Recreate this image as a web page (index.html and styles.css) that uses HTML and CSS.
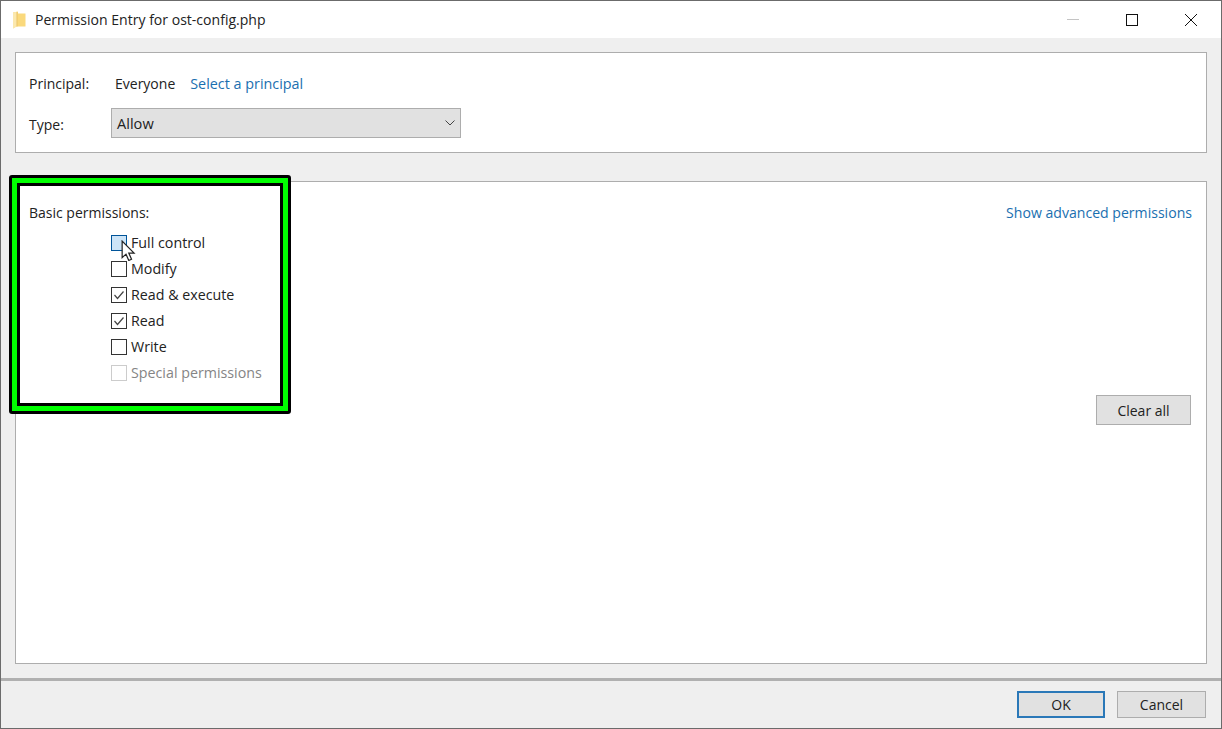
FILE: index.html
```html
<!DOCTYPE html>
<html>

<head>
    <title>Permission Entry for ost-config.php</title>
    <link rel="stylesheet" href="styles.css">
</head>

<body>
    <div class="window">
        <div class="title-bar">
            <svg class="folder-icon" width="13" height="18" viewBox="0 0 13 18">
                <path d="M0 1.5 L5 0.5 L5 2.5 L12.5 2.5 L12.5 15.5 L3 15.5 L0 17.5 Z" fill="#fad97c" />
                <path d="M0 1.5 L4 0.8 L4 15.5 L0 17.5 Z" fill="#fbe8ae" />
                <path d="M4 1 L4 15.5" stroke="#e9c468" fill="none" />
            </svg>
            <span class="title-text">Permission Entry for ost-config.php</span>
            <div class="window-controls">
                <svg width="12" height="12" viewBox="0 0 12 12">
                    <path d="M0 5.5 H12" stroke="#c4c4c4" fill="none" />
                </svg>
                <svg width="12" height="12" viewBox="0 0 12 12">
                    <rect x="0.5" y="0.5" width="11" height="11" stroke="#111" fill="none" />
                </svg>
                <svg width="12" height="12" viewBox="0 0 12 12">
                    <path d="M0 0 L12 12 M12 0 L0 12" stroke="#111" fill="none" />
                </svg>
            </div>
        </div>

        <div class="content">
            <div class="panel principal-panel">
                <div class="form-row principal-row">
                    <span class="form-label">Principal:</span>
                    <span class="principal-name">Everyone</span>
                    <a class="link">Select a principal</a>
                </div>
                <div class="form-row type-row">
                    <span class="form-label">Type:</span>
                    <div class="select-box">
                        <span>Allow</span>
                        <svg width="10" height="6" viewBox="0 0 10 6">
                            <path d="M0.5 0.5 L5 5 L9.5 0.5" stroke="#444" fill="none" />
                        </svg>
                    </div>
                </div>
            </div>

            <div class="panel permissions-panel">
                <div class="permissions-header">
                    <span>Basic permissions:</span>
                    <a class="link advanced-link">Show advanced permissions</a>
                </div>
                <div class="check-list">
                    <div class="check-row">
                        <span class="check-box hover"></span>
                        <span class="check-label">Full control</span>
                    </div>
                    <div class="check-row">
                        <span class="check-box"></span>
                        <span class="check-label">Modify</span>
                    </div>
                    <div class="check-row">
                        <span class="check-box">
                            <svg width="14" height="14" viewBox="0 0 14 14">
                                <path d="M2.5 7 L5.5 10.5 L11.5 3.5" stroke="#444" stroke-width="1.2" fill="none" />
                            </svg>
                        </span>
                        <span class="check-label">Read &amp; execute</span>
                    </div>
                    <div class="check-row">
                        <span class="check-box">
                            <svg width="14" height="14" viewBox="0 0 14 14">
                                <path d="M2.5 7 L5.5 10.5 L11.5 3.5" stroke="#444" stroke-width="1.2" fill="none" />
                            </svg>
                        </span>
                        <span class="check-label">Read</span>
                    </div>
                    <div class="check-row">
                        <span class="check-box"></span>
                        <span class="check-label">Write</span>
                    </div>
                    <div class="check-row disabled">
                        <span class="check-box"></span>
                        <span class="check-label">Special permissions</span>
                    </div>
                </div>
                <button class="btn clear-btn">Clear all</button>
            </div>
        </div>

        <div class="footer">
            <button class="btn ok-btn">OK</button>
            <button class="btn cancel-btn">Cancel</button>
        </div>

        <!-- green marker drawn over the screenshot -->
        <div class="highlight"></div>

        <svg class="cursor" width="15" height="21" viewBox="0 0 13.5 19">
            <path d="M1 1 L1 16 L4.5 12.8 L7 18.5 L9.5 17.4 L7 11.8 L11.8 11.8 Z" fill="#fff" stroke="#222" stroke-width="1.1" />
        </svg>
    </div>
</body>

</html>
```

FILE: styles.css
```css
* {
    box-sizing: border-box;
}

body {
    margin: 0;
    background-color: #555;
    font-family: 'Open Sans', 'Noto Sans', sans-serif;
    font-size: 14px;
    color: #222;
}

.window {
    position: relative;
    width: 1222px;
    height: 729px;
    display: flex;
    flex-direction: column;
    background-color: #efefef;
    border: 1px solid #6b6b6b;
    overflow: hidden;
}

.title-bar {
    height: 37px;
    flex-shrink: 0;
    display: flex;
    align-items: center;
    background-color: #ffffff;
    padding-left: 12px;
}

.folder-icon {
    margin-right: 9px;
}

.title-text {
    font-size: 14.05px;
}

.window-controls {
    margin-left: auto;
    margin-right: 24px;
    display: flex;
    gap: 47px;
}

.content {
    flex: 1;
    display: flex;
    flex-direction: column;
    gap: 28px;
    padding: 14px 14px 14px 14px;
}

.panel {
    background-color: #ffffff;
    border: 1px solid #adadad;
}

.principal-panel {
    height: 101px;
    padding: 0 13px;
}

.form-row {
    display: flex;
    align-items: center;
}

.principal-row {
    height: 30px;
    margin-top: 15px;
}

.type-row {
    height: 30px;
    margin-top: 10px;
}

.form-label {
    width: 82px;
}

.type-row .form-label {
    margin-top: 2px;
}

.principal-name {
    margin-left: 4px;
    margin-right: 15px;
}

.link {
    color: #1a6fb0;
    font-size: 14.35px;
}

.advanced-link {
    font-size: 14.08px;
}

.select-box {
    width: 350px;
    height: 30px;
    display: flex;
    align-items: center;
    justify-content: space-between;
    padding: 0 5px;
    background-color: #e1e1e1;
    border: 1px solid #adadad;
    font-size: 14.6px;
}

.permissions-panel {
    flex: 1;
    display: flex;
    flex-direction: column;
    padding: 21px 14px 0 13px;
}

.permissions-header {
    display: flex;
    justify-content: space-between;
    height: 20px;
    line-height: 20px;
}

.check-list {
    margin-top: 7px;
    margin-left: 82px;
}

.check-row {
    height: 26px;
    display: flex;
    align-items: center;
    font-size: 14.25px;
}

.check-label {
    margin-bottom: 2px;
}

.check-box {
    width: 16px;
    height: 16px;
    margin-right: 4px;
    border: 1px solid #333;
    background-color: #ffffff;
}

.check-box svg {
    display: block;
}

.check-box.hover {
    background-color: #cce4f7;
    border-color: #005499;
}

.check-row.disabled {
    color: #858585;
}

.check-row.disabled .check-box {
    border-color: #cccccc;
}

.btn {
    height: 30px;
    background-color: #e1e1e1;
    border: 1px solid #adadad;
    font-family: inherit;
    font-size: 14px;
    color: #222;
    padding: 0;
}

.clear-btn {
    width: 95px;
    margin-top: 9px;
    margin-right: 1px;
    align-self: flex-end;
}

.footer {
    height: 50px;
    flex-shrink: 0;
    border-top: 3px solid #b0b0b0;
    display: flex;
    justify-content: flex-end;
    gap: 12px;
    padding: 10px 15px 0 0;
}

.ok-btn,
.cancel-btn {
    height: 27px;
}

.ok-btn {
    width: 88px;
    border: 2px solid #2a78b8;
}

.cancel-btn {
    width: 89px;
}

.highlight {
    position: absolute;
    left: 8px;
    top: 174px;
    width: 282px;
    height: 239px;
    border: 3px solid #000000;
    border-radius: 3px;
    box-shadow: inset 0 0 0 5px #00ff00, inset 0 0 0 8px #000000;
    pointer-events: none;
}

.cursor {
    position: absolute;
    left: 120px;
    top: 239px;
}
```
